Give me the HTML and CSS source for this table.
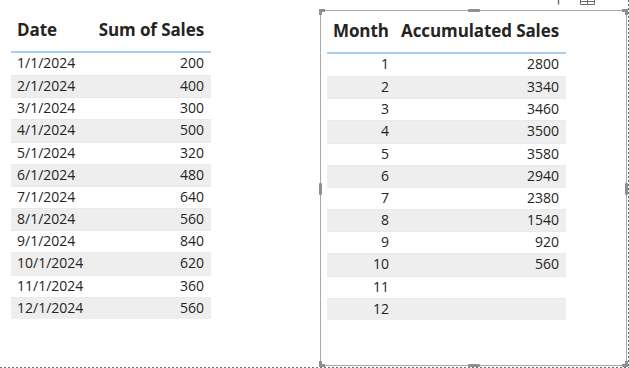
FILE: index.html
```html
<!DOCTYPE html>
<html>
<head>
<meta charset="utf-8">
<link rel="stylesheet" href="styles.css">
</head>
<body>
<div class="canvas">
  <div class="visual visual-left">
    <div class="tbl">
      <div class="hrow">
        <div class="cell c-date">Date</div>
        <div class="cell c-sum num">Sum of Sales</div>
      </div>
      <div class="row"><div class="cell c-date">1/1/2024</div><div class="cell c-sum num">200</div></div>
      <div class="row alt"><div class="cell c-date">2/1/2024</div><div class="cell c-sum num">400</div></div>
      <div class="row"><div class="cell c-date">3/1/2024</div><div class="cell c-sum num">300</div></div>
      <div class="row alt"><div class="cell c-date">4/1/2024</div><div class="cell c-sum num">500</div></div>
      <div class="row"><div class="cell c-date">5/1/2024</div><div class="cell c-sum num">320</div></div>
      <div class="row alt"><div class="cell c-date">6/1/2024</div><div class="cell c-sum num">480</div></div>
      <div class="row"><div class="cell c-date">7/1/2024</div><div class="cell c-sum num">640</div></div>
      <div class="row alt"><div class="cell c-date">8/1/2024</div><div class="cell c-sum num">560</div></div>
      <div class="row"><div class="cell c-date">9/1/2024</div><div class="cell c-sum num">840</div></div>
      <div class="row alt"><div class="cell c-date">10/1/2024</div><div class="cell c-sum num">620</div></div>
      <div class="row"><div class="cell c-date">11/1/2024</div><div class="cell c-sum num">360</div></div>
      <div class="row alt"><div class="cell c-date">12/1/2024</div><div class="cell c-sum num">560</div></div>
    </div>
  </div>

  <div class="visual visual-right">
    <div class="vh-icons">
      <svg class="ic-pin" width="6" height="6" viewBox="0 0 6 6"><path d="M2.5 0V4.5" stroke="#6b6b6b" stroke-width="1.4" fill="none"/></svg>
      <svg class="ic-focus" width="16" height="6" viewBox="0 0 16 6"><path d="M0.5 0V4.5H14.5V0M7.5 0V4.5M0.5 1.5H14.5" stroke="#6b6b6b" stroke-width="1" fill="none"/></svg>
    </div>
    <div class="tbl tbl-right">
      <div class="hrow">
        <div class="cell c-month">Month</div>
        <div class="cell c-acc num">Accumulated Sales</div>
      </div>
      <div class="row"><div class="cell c-month num">1</div><div class="cell c-acc num">2800</div></div>
      <div class="row alt"><div class="cell c-month num">2</div><div class="cell c-acc num">3340</div></div>
      <div class="row"><div class="cell c-month num">3</div><div class="cell c-acc num">3460</div></div>
      <div class="row alt"><div class="cell c-month num">4</div><div class="cell c-acc num">3500</div></div>
      <div class="row"><div class="cell c-month num">5</div><div class="cell c-acc num">3580</div></div>
      <div class="row alt"><div class="cell c-month num">6</div><div class="cell c-acc num">2940</div></div>
      <div class="row"><div class="cell c-month num">7</div><div class="cell c-acc num">2380</div></div>
      <div class="row alt"><div class="cell c-month num">8</div><div class="cell c-acc num">1540</div></div>
      <div class="row"><div class="cell c-month num">9</div><div class="cell c-acc num">920</div></div>
      <div class="row alt"><div class="cell c-month num">10</div><div class="cell c-acc num">560</div></div>
      <div class="row"><div class="cell c-month num">11</div><div class="cell c-acc num"></div></div>
      <div class="row alt"><div class="cell c-month num">12</div><div class="cell c-acc num"></div></div>
    </div>
    <span class="handle br-tl"></span>
    <span class="handle br-tr"></span>
    <span class="handle br-bl"></span>
    <span class="handle br-br"></span>
    <span class="handle mid-t"></span>
    <span class="handle mid-b"></span>
    <span class="handle mid-l"></span>
    <span class="handle mid-r"></span>
  </div>
</div>
</body>
</html>
```

FILE: styles.css
```css
html, body {
  margin: 0;
  padding: 0;
  background: #ffffff;
}

.canvas {
  position: relative;
  width: 629px;
  height: 368px;
  overflow: hidden;
  display: flex;
  align-items: flex-start;
  box-sizing: border-box;
  font-family: "Open Sans", "Noto Sans", sans-serif;
  color: #252423;
  background-image:
    repeating-linear-gradient(to right, #6e6e6e 0 2px, transparent 2px 4px),
    repeating-linear-gradient(to bottom, #6e6e6e 0 2px, transparent 2px 4px);
  background-size: 100% 1px, 1px 100%;
  background-position: left bottom, right top;
  background-repeat: no-repeat;
}

.visual-left {
  margin-left: 11px;
  margin-top: 12px;
  width: 200px;
}

.visual-right {
  position: relative;
  margin-left: 109px;
  margin-top: 10px;
  width: 307px;
  height: 356px;
  box-sizing: border-box;
  border: 1px solid #a9a9a9;
  padding: 2px 0 0 6px;
}

.tbl {
  display: flex;
  flex-direction: column;
}

.tbl-right {
  width: 239px;
}

.hrow {
  display: flex;
  height: 41px;
  box-sizing: border-box;
  border-bottom: 2px solid #a7cdef;
  padding-top: 6px;
  font-size: 17px;
  font-weight: 700;
  line-height: 23px;
  letter-spacing: -0.1px;
  white-space: nowrap;
}

.row {
  display: flex;
  height: 22.17px;
  box-sizing: border-box;
  font-size: 14px;
  line-height: 20.5px;
  white-space: nowrap;
}

.row + .row {
  border-top: 1px solid #e9e9e9;
}

.row.alt {
  background: #eeeeee;
}

.cell {
  box-sizing: border-box;
}

.num {
  text-align: right;
}

.c-date {
  width: 79px;
  padding-left: 6px;
}

.c-sum {
  width: 121px;
  padding-right: 7px;
}

.c-month {
  width: 67px;
  padding-left: 6px;
}

.row .c-month {
  padding-left: 0;
  padding-right: 5px;
}

.c-acc {
  width: 172px;
  padding-right: 7px;
}

.vh-icons {
  position: absolute;
  top: -11px;
  left: 235px;
  display: flex;
  gap: 18px;
}

.ic-pin {
  display: block;
}

.ic-focus {
  display: block;
}

.handle {
  position: absolute;
  background: #8f8f8f;
}

.br-tl,
.br-tr,
.br-bl,
.br-br {
  width: 6px;
  height: 6px;
  background: transparent;
  box-sizing: border-box;
  border-color: #8f8f8f;
  border-style: solid;
  border-width: 0;
}

.br-tl {
  left: -2px;
  top: -2px;
  border-left-width: 3px;
  border-top-width: 3px;
}

.br-tr {
  right: -2px;
  top: -2px;
  border-right-width: 3px;
  border-top-width: 3px;
}

.br-bl {
  left: -2px;
  bottom: -2px;
  border-left-width: 3px;
  border-bottom-width: 3px;
}

.br-br {
  right: -2px;
  bottom: -2px;
  border-right-width: 3px;
  border-bottom-width: 3px;
}

.mid-t,
.mid-b {
  left: 147px;
  width: 12px;
  height: 3px;
  border-radius: 1px;
}

.mid-t {
  top: -2px;
}

.mid-b {
  bottom: -2px;
}

.mid-l,
.mid-r {
  top: 172px;
  width: 3px;
  height: 12px;
  border-radius: 1px;
}

.mid-l {
  left: -2px;
}

.mid-r {
  right: -2px;
}
```
